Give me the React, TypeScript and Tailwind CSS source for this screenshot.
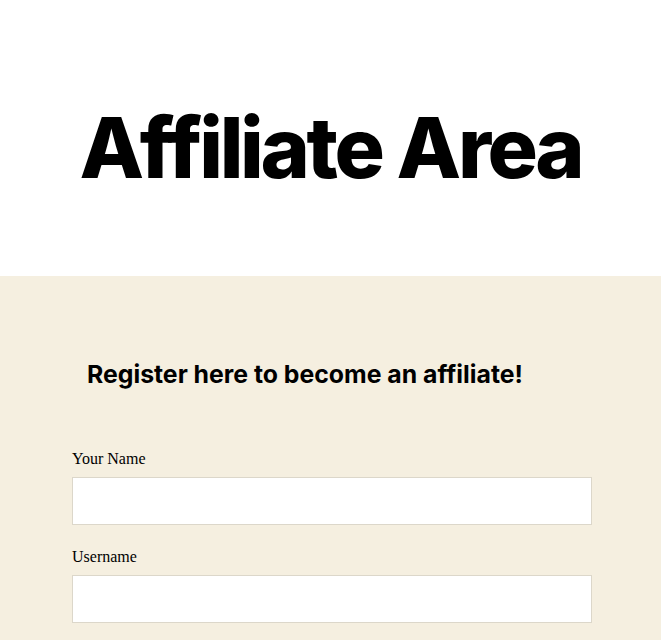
export default function App() {
    return (
        <div className="min-h-screen bg-white" style={{ fontFamily: "Inter, 'Noto Sans', sans-serif" }}>
            <header className="h-[276px] flex items-start justify-center pt-[106px]">
                <h1 className="text-[84px] leading-none font-extrabold tracking-[-0.04em] text-black font-['Inter',sans-serif]">
                    Affiliate Area
                </h1>
            </header>

            <section className="bg-[#f5efe0] pt-[83px] pb-10">
                <h2 className="pl-[87px] text-[24.8px] leading-tight font-bold text-black font-['Inter',sans-serif]">
                    Register here to become an affiliate!
                </h2>

                <form className="mt-[59px] px-[72px] w-[520px] font-['Liberation_Serif',serif]">
                    <div className="mb-[22px]">
                        <label htmlFor="name" className="block text-[16px] leading-[20px] text-black mb-[8px]">Your Name</label>
                        <input id="name" type="text" className="block w-[520px] h-[48px] bg-white border border-[#dcd7ca]" />
                    </div>
                    <div className="mb-[22px]">
                        <label htmlFor="username" className="block text-[16px] leading-[20px] text-black mb-[8px]">Username</label>
                        <input id="username" type="text" className="block w-[520px] h-[48px] bg-white border border-[#dcd7ca]" />
                    </div>
                </form>
            </section>
        </div>
    )
}
